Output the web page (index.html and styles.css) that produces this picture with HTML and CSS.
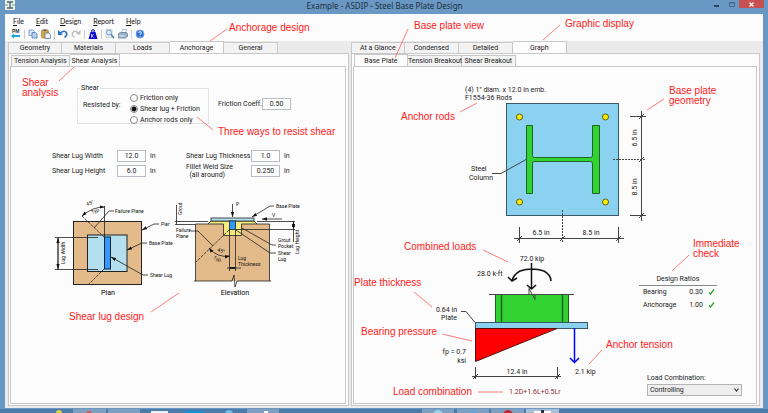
FILE: index.html
```html
<!DOCTYPE html>
<html lang="en">
<head>
  <meta charset="UTF-8">
  <meta name="viewport" content="width=device-width, initial-scale=1.0">
  <title>Example - ASDIP - Steel Base Plate Design</title>
  <link rel="stylesheet" href="styles.css">
</head>
<body>
  <header class="titlebar">
    <svg class="app-icon" width="10" height="10" viewBox="0 0 10 10">
      <rect x="0" y="0" width="10" height="10" fill="#e9efe8"/>
      <path d="M2 2h6M2 8h6M5 2v6" stroke="#4d6a6a" stroke-width="1.4"/>
      <path d="M0 5h3M7 5h3" stroke="#7c9a92"/>
    </svg>
    <h1>Example - ASDIP - Steel Base Plate Design</h1>
    <div class="window-buttons">
      <button aria-label="Minimize"><svg width="5" height="5"><path d="M0 4h5" stroke="#1d2a38" stroke-width="1.5"/></svg></button>
      <button aria-label="Maximize"><svg width="6" height="5"><path d="M.5 .5h5v4h-5zM0 1h6" fill="none" stroke="#44658a"/></svg></button>
      <button class="close" aria-label="Close"><svg width="5" height="5"><path d="M.5 .5l4 4M4.500 .5l-4 4" stroke="#fff" stroke-width="1.200"/></svg></button>
    </div>
  </header>

  <main class="window">
    <nav class="menu">
      <a href="#"><u>F</u>ile</a>
      <a href="#"><u>E</u>dit</a>
      <a href="#"><u>D</u>esign</a>
      <a href="#"><u>R</u>eport</a>
      <a href="#"><u>H</u>elp</a>
    </nav>

    <div class="toolbar">
      <button aria-label="Project manager"><svg width="10" height="10" viewBox="0 0 10 10">
        <text class="pm" x="1" y="4">PM</text>
        <path d="M0 7l3-2.500v1.500h6v2h-6v1.500z" fill="#1ba4e0"/></svg></button>
      <i class="sep"></i>
      <button aria-label="Copy"><svg width="10" height="10" viewBox="0 0 10 10">
        <path d="M1 1h4l1.500 1.500v4h-5.500z" fill="#dce9f8" stroke="#6d93c4" stroke-width=".8"/>
        <path d="M4 3.500h3.500l1.500 1.500v4h-5z" fill="#b9d0f0" stroke="#4c79b8" stroke-width=".8"/></svg></button>
      <button aria-label="Paste"><svg width="10" height="10" viewBox="0 0 10 10">
        <rect x=".5" y="1" width="7" height="8" rx="1" fill="#d8a648" stroke="#9a7330" stroke-width=".6"/>
        <rect x="2.500" y=".3" width="3" height="1.800" fill="#667"/>
        <path d="M4 4h4l1.500 1.500v4h-5.500z" fill="#eef3fa" stroke="#4c6a96" stroke-width=".7"/></svg></button>
      <i class="sep"></i>
      <button aria-label="Undo"><svg width="10" height="10" viewBox="0 0 10 10">
        <path d="M2.500 4q4-3.500 6 0q1 2.500-2 4.500" fill="none" stroke="#2a6fd0" stroke-width="1.700"/>
        <path d="M0 1v5h4.800z" fill="#2a6fd0"/></svg></button>
      <button aria-label="Redo"><svg width="10" height="10" viewBox="0 0 10 10">
        <path d="M7.500 4q-4-3.500-6 0q-1 2.500 2 4.500" fill="none" stroke="#bcbcbc" stroke-width="1.500"/>
        <path d="M9.500 1v4.500h-4.500z" fill="#bcbcbc"/></svg></button>
      <i class="sep"></i>
      <button aria-label="Weights"><svg width="10" height="10" viewBox="0 0 10 10">
        <path d="M2.500 3h5l2 7h-9z" fill="#1010d0"/>
        <circle cx="5" cy="2" r="1.400" fill="none" stroke="#1010d0"/>
        <path d="M3.500 5v3.500M5.500 5l-1.500 2l1.500 1.500" stroke="#fff" stroke-width=".7" fill="none"/></svg></button>
      <i class="sep"></i>
      <button aria-label="Preview"><svg width="10" height="10" viewBox="0 0 10 10">
        <path d="M1 .5h6v8h-6z" fill="#f2f6fb" stroke="#b5c4d6" stroke-width=".7"/>
        <circle cx="4" cy="3.500" r="2.500" fill="#d6ecfa" stroke="#7397b8" stroke-width=".9"/>
        <path d="M6 5.500l3 3.500" stroke="#3f7ea0" stroke-width="1.400"/></svg></button>
      <button aria-label="Print"><svg width="10" height="10" viewBox="0 0 10 10">
        <path d="M3.500 4l1-3.500h4l-1 3.500z" fill="#fff" stroke="#8ea4bd" stroke-width=".7"/>
        <path d="M.5 4.500l2-1h6l1 1v3l-2 1.500h-7z" fill="#9db3cc" stroke="#5b7694" stroke-width=".7"/>
        <path d="M1.500 7h5" stroke="#eef"/></svg></button>
      <i class="sep"></i>
      <button aria-label="Help"><svg width="10" height="10" viewBox="0 0 10 10">
        <circle cx="5" cy="5" r="4" fill="#2e6fd2" stroke="#7ba6e2" stroke-width=".8"/>
        <path d="M3.700 4q0-1.400 1.400-1.400t1.300 1.300q0 .8-1.300 1.500v.6M5.100 6.800v.9" fill="none" stroke="#fff" stroke-width=".9"/></svg></button>
    </div>

    <div class="panes">
      <!-- Input side -->
      <section class="pane">
        <div class="tabs">
          <button>Geometry</button>
          <button>Materials</button>
          <button>Loads</button>
          <button class="active">Anchorage</button>
          <button>General</button>
        </div>
        <div class="tab-body">
          <div class="tabs inner">
            <button>Tension Analysis</button>
            <button class="active">Shear Analysis</button>
          </div>
          <div class="sheet input-sheet">
            <div class="shear-row">
              <fieldset>
                <legend>Shear</legend>
                <span class="resisted">Resisted by:</span>
                <div class="radios">
                  <label><input type="radio" name="shear">Friction only</label>
                  <label><input type="radio" name="shear" checked>Shear lug + Friction</label>
                  <label><input type="radio" name="shear">Anchor rods only</label>
                </div>
              </fieldset>
              <label for="coeff">Friction Coeff.</label>
              <input type="text" id="coeff" value="0.50">
            </div>

            <div class="lug-fields">
              <label for="lugWidth">Shear Lug Width</label>
              <input type="text" id="lugWidth" value="12.0">
              <span>in</span>
              <label for="lugThick">Shear Lug Thickness</label>
              <input type="text" id="lugThick" value="1.0">
              <span>in</span>
              <label for="lugHeight">Shear Lug Height</label>
              <input type="text" id="lugHeight" value="6.0">
              <span>in</span>
              <label for="weld">Fillet Weld Size<br>&nbsp; (all around)</label>
              <input type="text" id="weld" value="0.250">
              <span>in</span>
            </div>

            <svg class="lug-drawing" width="256" height="100" viewBox="50 200 256 100">
              <defs>
                <marker id="tip" viewBox="0 0 6 6" refX="6" refY="3" markerWidth="5" markerHeight="5" markerUnits="userSpaceOnUse" orient="auto-start-reverse">
                  <path d="M0 1l6 2l-6 2z" fill="#111"/>
                </marker>
              </defs>
              <!-- Plan -->
              <rect x="73.500" y="221.500" width="68" height="63" fill="#e3ba8a" stroke="#222"/>
              <rect x="87.500" y="235" width="39.500" height="36.500" fill="#b4dfee" stroke="#222"/>
              <rect x="104.500" y="237" width="6" height="32" fill="#3399ff" stroke="#123"/>
              <g class="cad">
                <path d="M104.500 237V206M58 237.500v32M55 237.500h43M55 269.500h43"/>
                <path d="M82 216q10-9 22.500-9" marker-start="url(#tip)" marker-end="url(#tip)"/>
                <path class="dash" d="M82 216l22 21M104 269l-16 16"/>
                <path d="M114 211h-5l-15 17M159 224h-5" />
                <path d="M154 224l-12 6" marker-end="url(#tip)"/>
                <path d="M147 243h-5l-15 7" marker-end="url(#tip)"/>
                <path d="M148 275h-5l-32-18" marker-end="url(#tip)"/>
                <path d="M58 238v31" marker-start="url(#tip)" marker-end="url(#tip)"/>
              </g>
              <g class="cad-text">
                <text x="115" y="213">Failure Plane</text>
                <text x="161" y="226">Pier</text>
                <text x="149" y="245">Base Plate</text>
                <text x="150" y="277">Shear Lug</text>
                <text transform="translate(65 264) rotate(-90)">Lug Width</text>
                <text transform="translate(87 206) rotate(-20)">45°</text>
                <text transform="translate(92 214) rotate(-20)">Typ.</text>
              </g>
              <text class="caption" x="108" y="295">Plan</text>

              <!-- Elevation -->
              <rect x="195.500" y="224" width="74" height="57" fill="#e3ba8a"/>
              <path d="M208 224l3-3h43l3 3h-15.500v11.500h-18v-11.500z" fill="#f4ea7e" stroke="#222" stroke-width=".8"/>
              <rect x="211" y="218" width="43" height="3" fill="#b4dfee" stroke="#222" stroke-width=".8"/>
              <rect x="229.500" y="221" width="6" height="8.500" fill="#3399ff" stroke="#123" stroke-width=".8"/>
              <g class="cad">
                <path d="M195.500 281V224H208M257 224h12.500v57M194 281h38l2-6l1 12l2-6h34M229.500 229v42M235.500 229v42"/>
                <path d="M232.500 204v13" marker-end="url(#tip)"/>
                <path d="M282 219h-20" marker-end="url(#tip)"/>
                <path d="M274 206h-4l-18 11" marker-end="url(#tip)"/>
                <path d="M257 221.500h38M236 229.500h59M293.500 221v21"/>
                <path d="M293.500 222v7" marker-start="url(#tip)" marker-end="url(#tip)"/>
                <path d="M276 245h-4l-30-17M276 253h-6l-34-23"/>
                <path d="M176.500 205v20M175 221.500h33M175 224.500h20"/>
                <path d="M191 231h7l15 15"/>
                <path class="dash" d="M229 230l-33 32"/>
                <path d="M209 248q8 10 21 8" marker-start="url(#tip)" marker-end="url(#tip)"/>
                <path d="M227 268h14" />
                <path d="M229.500 268h6" stroke-width="2"/>
              </g>
              <g class="cad-text">
                <text x="236" y="206">P</text>
                <text x="276" y="208">Base Plate</text>
                <text x="272" y="217">V</text>
                <text x="278" y="242">Grout</text>
                <text x="278" y="248">Pocket</text>
                <text x="278" y="255">Shear</text>
                <text x="278" y="261">Lug</text>
                <text x="176" y="232">Failure</text>
                <text x="176" y="238">Plane</text>
                <text x="238" y="260">Lug</text>
                <text x="238" y="266">Thickness</text>
                <text transform="translate(182 215) rotate(-90)">Grout</text>
                <text transform="translate(299 254) rotate(-90)">Lug Height</text>
                <text transform="translate(217 251) rotate(20)">45°</text>
                <text transform="translate(213 259) rotate(20)">Typ.</text>
              </g>
              <text class="caption" x="235" y="295">Elevation</text>
            </svg>
          </div>
        </div>

        <svg class="notes" width="340" height="360" viewBox="5 14 340 360">
          <path d="M227 29L210 41M74 67L59 81M197 117L213 130M151 312L179 293"/>
          <text x="229" y="31">Anchorage design</text>
          <text x="22" y="86">Shear</text>
          <text x="22" y="96">analysis</text>
          <text x="218" y="135">Three ways to resist shear</text>
          <text x="69" y="320">Shear lug design</text>
        </svg>
      </section>

      <!-- Results side -->
      <section class="pane results">
        <div class="tabs">
          <button>At a Glance</button>
          <button>Condensed</button>
          <button>Detailed</button>
          <button class="active">Graph</button>
        </div>
        <div class="tab-body">
          <div class="tabs inner">
            <button class="active">Base Plate</button>
            <button>Tension Breakout</button>
            <button>Shear Breakout</button>
          </div>
          <div class="sheet graph-sheet">
            <svg class="graph" width="230" height="320" viewBox="430 80 230 320">
              <!-- Plate plan -->
              <rect x="506.500" y="103.500" width="112" height="112" fill="#8ad2f0" stroke="#3c5968"/>
              <path d="M526.500 125.500h6v30q0 2 2 2h56q2 0 2-2v-30h7v68h-7v-30q0-2-2-2h-56q-2 0-2 2v30h-6z" fill="#33d233" stroke="#1c6420"/>
              <g fill="#ffee00" stroke="#5d5d20">
                <circle cx="519.500" cy="117" r="3"/>
                <circle cx="605.500" cy="117" r="3"/>
                <circle cx="519.500" cy="202" r="3"/>
                <circle cx="605.500" cy="202" r="3"/>
              </g>
              <g class="dim">
                <path d="M641.500 111v110M630 116.500h16M630 215.500h16M639 119l5-5M639 162l5-5M639 218l5-5"/>
                <path d="M514 238.500h110M519.500 227v16M618.500 227v16M517 241l5-5M560 241l5-5M616 241l5-5"/>
                <path class="dots" d="M613 159.500h33M562.500 210v33"/>
                <path d="M492 173.500h9l25-14"/>
              </g>
              <g class="label">
                <text x="465" y="92">(4) 1" diam. x 12.0 in emb.</text>
                <text x="465" y="100">F1554-36 Rods</text>
                <text x="471" y="171">Steel</text>
                <text x="469" y="180">Column</text>
                <text class="mid" x="541" y="235">6.5 in</text>
                <text class="mid" x="591" y="235">8.5 in</text>
                <text class="mid" transform="translate(637 138) rotate(-90)">6.5 in</text>
                <text class="mid" transform="translate(637 187) rotate(-90)">8.5 in</text>
              </g>

              <!-- Side view -->
              <rect x="495.500" y="294.500" width="73" height="28" fill="#33d233" stroke="#1c6420"/>
              <path d="M501.500 294v28M562.500 294v28" stroke="#1c6420" stroke-width="1.500"/>
              <rect x="475.500" y="322.500" width="112" height="6" fill="#8ad2f0" stroke="#3c5968"/>
              <path d="M475.500 328.500H557L475.500 361.500z" fill="#f00" stroke="#511"/>
              <g class="dim">
                <path d="M489 294.500h40v-6l6 11v-5h39M461 311.500h5l9 11"/>
                <path d="M472 376.500h89M475.500 367v12M557.500 367v12M473 379l5-5M555 379l5-5"/>
              </g>
              <path class="load" d="M531.500 263v26M527 285l4.500 4l4.500-4M551 281q0-6-7-10q-12-4-24 0q-7 4-8 10M508 277l4 4l5-3"/>
              <path d="M574.500 328v34M570 358l4.500 4.500l4.500-4.500" fill="none" stroke="#00f" stroke-width="1.500"/>
              <g class="label">
                <text class="mid" x="532" y="261">72.0 kip</text>
                <text x="477" y="276">28.0 k-ft</text>
                <text class="end" x="457" y="312">0.64 in</text>
                <text class="end" x="457" y="320">Plate</text>
                <text class="end" x="466" y="354">fp = 0.7</text>
                <text class="end" x="466" y="363">ksi</text>
                <text class="mid" x="517" y="374">12.4 in</text>
                <text x="575" y="374">2.1 kip</text>
                <text class="combo" x="509" y="394">1.2D+1.6L+0.5Lr</text>
              </g>
            </svg>

            <div class="side">
              <table>
                <thead>
                  <tr><th colspan="3">Design Ratios</th></tr>
                </thead>
                <tbody>
                  <tr><td>Bearing</td><td>0.30</td><td><svg width="7" height="6"><path d="M1 3.500l1.500 1.500l3.500-4.500" fill="none" stroke="#2da32d" stroke-width="1.300"/></svg></td></tr>
                  <tr><td>Anchorage</td><td>1.00</td><td><svg width="7" height="6"><path d="M1 3.500l1.500 1.500l3.500-4.500" fill="none" stroke="#2da32d" stroke-width="1.300"/></svg></td></tr>
                </tbody>
              </table>
              <div class="combination">
                <label for="combo">Load Combination:</label>
                <div class="select-box">
                  <select id="combo"><option>Controlling</option></select>
                  <svg width="5" height="4"><path d="M.5 .5l2 2.500l2-2.500" fill="none" stroke="#333" stroke-width="1.200"/></svg>
                </div>
              </div>
            </div>
          </div>
        </div>

        <svg class="notes" width="413" height="390" viewBox="350 14 413 390">
          <path d="M408 29L395 58M560 25L543 40M664 99L647 110M460 112L477 103M483 250L508 262M689 255L672 271M414 292L432 307M442 334L472 341M602 350L589 364M478 392H503"/>
          <text x="414" y="29">Base plate view</text>
          <text x="565" y="27">Graphic display</text>
          <text x="669" y="94">Base plate</text>
          <text x="669" y="104">geometry</text>
          <text x="401" y="120">Anchor rods</text>
          <text x="404" y="250">Combined loads</text>
          <text x="693" y="247">Immediate</text>
          <text x="693" y="257">check</text>
          <text x="354" y="286">Plate thickness</text>
          <text x="361" y="335">Bearing pressure</text>
          <text x="606" y="348">Anchor tension</text>
          <text x="393" y="395">Load combination</text>
        </svg>
      </section>
    </div>
  </main>

  <footer class="taskbar">
    <svg width="560" height="4" viewBox="0 409 560 4">
      <path d="M73 409h33v4h-33zM108 409h32v4h-32zM247 409h32v4h-32zM422 409h32v4h-32zM457 409h32v4h-32zM491 409h33v4h-33z" fill="#7e9fc0"/>
      <path d="M526 409h33v4h-33z" fill="#a8bfd6"/>
      <circle cx="59" cy="413" r="3" fill="#d8d040"/>
      <circle cx="89" cy="414" r="3" fill="#d05a50"/>
      <path d="M151 411h17v2h-17z" fill="#eef3f8"/>
      <path d="M185 411h18v2h-18z" fill="#0d93d8"/>
      <circle cx="229" cy="414" r="4" fill="#6fc0e8"/>
      <path d="M264 411h4v2h-4z" fill="#fff"/>
      <circle cx="438" cy="415" r="5" fill="#9bd3ee"/>
      <circle cx="473" cy="415" r="4" fill="#5aa9e0"/>
      <circle cx="508" cy="415" r="5" fill="#c02a38"/>
      <path d="M534 411h17v2h-17z" fill="#fff"/>
      <path d="M541 410h3v3h-3z" fill="#234"/>
    </svg>
  </footer>
</body>
</html>
```

FILE: styles.css
```css
* { box-sizing: border-box; }

body {
  margin: 0;
  min-height: 100vh;
  display: flex;
  flex-direction: column;
  background: #6a98c4;
  color: #222;
  font-family: Roboto, "Liberation Sans", Arial, sans-serif;
  font-size: 7px;
  line-height: 8px;
  white-space: nowrap;
}
svg { display: block; }
button, input, select {
  font: inherit;
  color: inherit;
  margin: 0;
  padding: 0;
  border: none;
  background: none;
}

/* Title bar */
.titlebar {
  height: 14px;
  display: grid;
  grid-template-columns: 1fr auto 1fr;
  align-items: start;
  padding: 0 4px 0 5px;
}
.titlebar h1 {
  margin: 0;
  font: 8px/12px "Noto Sans", sans-serif;
  color: #1f2f40;
}
.window-buttons { display: flex; justify-content: flex-end; }
.window-buttons button {
  width: 15px;
  height: 8px;
  display: flex;
  align-items: center;
  justify-content: center;
}
.window-buttons .close { width: 25px; background: #c75050; }

.window {
  flex: 1;
  display: flex;
  flex-direction: column;
  margin: 0 5px 1px;
  background: #f0f0f0;
}

.menu {
  display: flex;
  gap: 12px;
  height: 13px;
  padding-left: 8px;
  background: #fcfcfc;
  font: 7px/14px Lato, sans-serif;
}
.menu a { color: #111; text-decoration: none; }

.toolbar {
  display: flex;
  align-items: center;
  gap: 3px;
  height: 14px;
  padding-left: 6px;
  background: #fcfcfc;
}
.toolbar .sep { width: 1px; height: 9px; background: #ccc; }
.pm { font: bold 5px "Liberation Sans", sans-serif; fill: #333; }

/* Panes */
.panes { flex: 1; display: flex; background: #ebebeb; }
.pane {
  position: relative;
  width: 45.5%;
  display: flex;
  flex-direction: column;
  padding: 0 1px 2px 3px;
}
.pane.results { width: 54.5%; padding: 0 3px 2px 1px; }

.tabs { display: flex; align-items: flex-end; height: 12px; }
.tabs button {
  width: 54px;
  height: 11px;
  border: 1px solid #c8c8c8;
  border-bottom: none;
  border-left-width: 0;
  background: #f3f3f3;
}
.tabs button:first-child { border-left-width: 1px; }
.tabs button.active { height: 12px; background: #fcfcfc; }
.tab-body {
  flex: 1;
  display: flex;
  flex-direction: column;
  padding: 0 2px 1px 1px;
  border: 1px solid #c8c8c8;
  background: #fcfcfc;
}
.inner { padding-left: 1px; }
.sheet { flex: 1; border: 1px solid #c8c8c8; }
.inner button { width: auto; padding: 0 2px; }
.results .inner button { width: 54px; padding: 0; }

/* Shear inputs */
.input-sheet { padding: 17px 8px 8px 41px; }
.shear-row {
  display: flex;
  align-items: center;
  height: 40px;
  padding-left: 25px;
}
fieldset {
  display: flex;
  width: 132px;
  height: 40px;
  margin: 0 9px 0 0;
  padding: 0 0 0 5px;
  border: 1px solid #e2e2e2;
}
legend { padding: 0 1px; margin-left: -3px; }
.resisted { width: 47px; padding-top: 9px; }
.radios label { display: flex; align-items: center; gap: 2px; height: 11px; }
input[type="radio"] {
  appearance: none;
  width: 8px;
  height: 8px;
  border: 1px solid #888;
  border-radius: 50%;
  background: #fff;
}
input[type="radio"]:checked { background: radial-gradient(#111 2px, #fff 3px); }
input[type="text"] {
  width: 29px;
  height: 12px;
  border: 1px solid #b8bcc4;
  background: #fff;
  text-align: center;
}
.shear-row > label { width: 44px; }

.lug-fields {
  display: grid;
  grid-template-columns: 65px 29px 40px 65px 29px 20px;
  grid-auto-rows: 12px;
  row-gap: 3px;
  align-items: center;
  margin-top: 26px;
}
.lug-fields span { padding-left: 4px; }

.lug-drawing { margin: 23px 0 0 -2px; }
.cad { fill: none; stroke: #222; stroke-width: .8; }
.dash { stroke-dasharray: 3 1; }
.cad-text { font-size: 5px; fill: #111; }
.caption { font-size: 7px; text-anchor: middle; }

/* Graph */
.graph-sheet { display: flex; padding: 13px 0 0 76px; }
.graph { flex: none; }
.dim { fill: none; stroke: #444; stroke-width: 1; }
.dots { stroke-dasharray: 2 1; }
.load { fill: none; stroke: #111; stroke-width: 1.5; }
.label { fill: #222; }
.mid { text-anchor: middle; }
.end { text-anchor: end; }
.combo { fill: #8b2a35; }

.side {
  flex: 1;
  display: flex;
  flex-direction: column;
  justify-content: flex-end;
  gap: 62px;
  margin-left: -21px;
  padding-bottom: 7px;
}
table { width: 78px; border-collapse: collapse; }
th { font-weight: normal; padding: 0 0 2px; border-bottom: 1px solid #888; }
td { height: 13px; padding: 0; }
td:first-child { padding-left: 4px; }
.combination { width: 95px; margin-left: 8px; }
.combination label { display: block; line-height: 11px; }
.select-box { position: relative; }
.select-box select {
  appearance: none;
  display: block;
  width: 100%;
  height: 12px;
  padding-left: 2px;
  border: 1px solid #b4b4b4;
  background: #eee;
}
.select-box svg { position: absolute; right: 3px; top: 4px; pointer-events: none; }

/* Red callouts drawn over the panes */
.notes {
  position: absolute;
  left: 0;
  top: -27px;
  pointer-events: none;
  font: 10px "Liberation Sans", Arial, sans-serif;
  fill: #ff2020;
}
.notes path { stroke: #ff5a5a; stroke-width: .8; }

.taskbar { height: 4px; background: #4c7ba9; overflow: hidden; }
```
